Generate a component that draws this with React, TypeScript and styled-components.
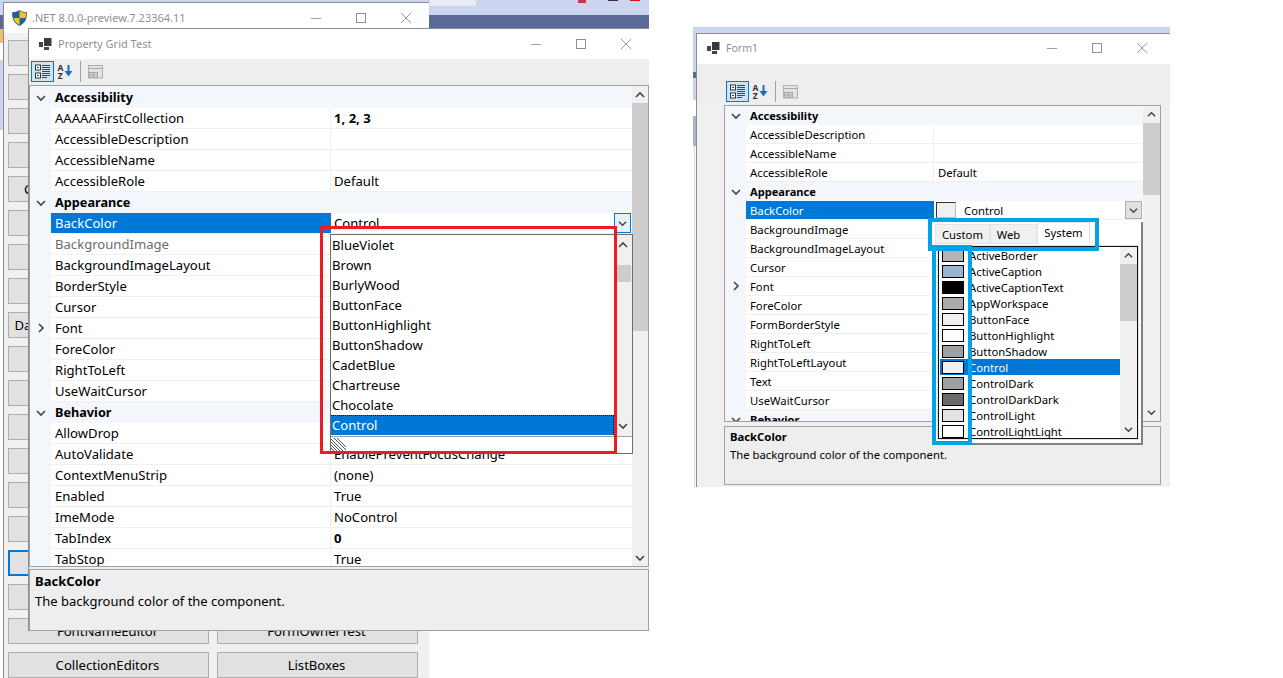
import React from "react";
import styled, { createGlobalStyle } from "styled-components";

const Global = createGlobalStyle`
  html, body { margin: 0; padding: 0; background: #fff; }
  * { box-sizing: border-box; }
`;

const FONT = `"Noto Sans", "Open Sans", "Liberation Sans", sans-serif`;

const Desktop = styled.div`
  position: relative;
  width: 1283px;
  height: 678px;
  overflow: hidden;
  background: #fff;
  font-family: ${FONT};
  color: #000;
`;

const Scrap = styled.div<{ $l: number; $t: number; $w: number; $h: number; $c: string }>`
  position: absolute;
  left: ${(p) => p.$l}px;
  top: ${(p) => p.$t}px;
  width: ${(p) => p.$w}px;
  height: ${(p) => p.$h}px;
  background: ${(p) => p.$c};
`;

const Win = styled.section<{ $l: number; $t: number; $w: number; $h: number }>`
  position: absolute;
  left: ${(p) => p.$l}px;
  top: ${(p) => p.$t}px;
  width: ${(p) => p.$w}px;
  height: ${(p) => p.$h}px;
  display: flex;
  flex-direction: column;
  background: #f0f0f0;
  border-left: 1px solid #8d8d8d;
  border-top: 1px solid #8d8d8d;
`;

const TitleBar = styled.header<{ $size: number; $pad: number; $gap: number; $lift?: number }>`
  flex: 0 0 30px;
  display: flex;
  align-items: center;
  background: #fff;
  color: #8f8f8f;
  font-size: ${(p) => p.$size}px;
  padding-left: ${(p) => p.$pad}px;
  padding-bottom: ${(p) => p.$lift || 0}px;
  gap: ${(p) => p.$gap}px;
`;

const TitleText = styled.span`
  flex: 1;
  white-space: nowrap;
  padding-bottom: 1px;
`;

const Caption = styled.div<{ $gap: number; $right: number }>`
  display: flex;
  gap: ${(p) => p.$gap}px;
  padding-right: ${(p) => p.$right}px;
  align-items: center;
`;

const ToolStrip = styled.div<{ $h: number; $pad: number; $top?: number }>`
  flex: 0 0 ${(p) => p.$h}px;
  display: flex;
  align-items: center;
  gap: 1px;
  background: #eeeeee;
  padding-left: ${(p) => p.$pad}px;
  padding-top: ${(p) => p.$top || 0}px;
`;

const ToolBtn = styled.div<{ $on?: boolean; $w: number; $h: number }>`
  width: ${(p) => p.$w}px;
  height: ${(p) => p.$h}px;
  display: flex;
  align-items: center;
  justify-content: center;
  background: ${(p) => (p.$on ? "#cce4f7" : "transparent")};
  border: 1px solid ${(p) => (p.$on ? "#0078d7" : "transparent")};
`;

const ToolSep = styled.div`
  width: 1px;
  height: 21px;
  margin: 0 3px 0 3px;
  background: #a0a0a0;
`;

const GridFrame = styled.div<{ $h: number; $m?: string }>`
  position: relative;
  flex: 0 0 ${(p) => p.$h}px;
  margin: ${(p) => p.$m || "0"};
  display: flex;
  background: #fff;
  border: 1px solid #a0a0a0;
  overflow: hidden;
`;

const Rows = styled.div<{ $top: number }>`
  flex: 1;
  min-width: 0;
  overflow: hidden;
  background: #f3f6fb;
  padding-top: ${(p) => p.$top}px;
`;

const Cat = styled.div<{ $h: number; $size: number; $m: number; $lift: number }>`
  height: ${(p) => p.$h}px;
  display: flex;
  align-items: center;
  font-size: ${(p) => p.$size}px;
  font-weight: 700;
  white-space: nowrap;
  padding-left: ${(p) => p.$m + 4}px;
  padding-bottom: ${(p) => p.$lift}px;
  position: relative;
`;

const CaretSlot = styled.span<{ $m: number }>`
  position: absolute;
  left: 0;
  top: 0;
  bottom: 0;
  width: ${(p) => p.$m}px;
  display: flex;
  align-items: center;
  justify-content: center;
`;

const Row = styled.div<{ $h: number; $size: number; $m: number }>`
  position: relative;
  height: ${(p) => p.$h}px;
  margin-left: ${(p) => p.$m}px;
  display: flex;
  background: #fff;
  font-size: ${(p) => p.$size}px;
  white-space: nowrap;
  border-bottom: 1px solid #f0f0f0;
`;

const RowCaret = styled.span<{ $m: number }>`
  position: absolute;
  left: -${(p) => p.$m}px;
  top: 0;
  bottom: 0;
  width: ${(p) => p.$m}px;
  display: flex;
  align-items: center;
  justify-content: center;
`;

const NameCell = styled.div<{ $w: number; $sel?: boolean; $dim?: boolean }>`
  flex: 0 0 ${(p) => p.$w}px;
  display: flex;
  align-items: center;
  padding-left: 4px;
  background: ${(p) => (p.$sel ? "#0078d7" : "#fff")};
  color: ${(p) => (p.$sel ? "#fff" : p.$dim ? "#6d6d6d" : "#000")};
  border-right: 1px solid ${(p) => (p.$sel ? "#0078d7" : "#f0f0f0")};
`;

const ValueCell = styled.div<{ $bold?: boolean; $pad: number }>`
  flex: 1;
  display: flex;
  align-items: center;
  padding-left: ${(p) => p.$pad}px;
  font-weight: ${(p) => (p.$bold ? 700 : 400)};
`;

const Swatch = styled.span`
  flex: 0 0 20px;
  height: 16px;
  margin: 0 8px 0 -2px;
  background: #f0f0f0;
  border: 1px solid #333;
  border-right-color: #bbb;
  border-bottom-color: #bbb;
`;

const EditBtn = styled.span<{ $blue?: boolean; $w: number }>`
  position: absolute;
  right: 1px;
  top: 0;
  bottom: 0;
  width: ${(p) => p.$w}px;
  display: flex;
  align-items: center;
  justify-content: center;
  background: ${(p) => (p.$blue ? "#e5f1fb" : "#e1e1e1")};
  border: 1px solid ${(p) => (p.$blue ? "#0078d7" : "#adadad")};
`;

const VBar = styled.div<{ $w: number }>`
  flex: 0 0 ${(p) => p.$w}px;
  display: flex;
  flex-direction: column;
  align-items: stretch;
  background: #f0f0f0;
`;

const BarBtn = styled.div<{ $h: number }>`
  flex: 0 0 ${(p) => p.$h}px;
  display: flex;
  align-items: center;
  justify-content: center;
`;

const Thumb = styled.div<{ $h: number; $inset?: number; $before?: number }>`
  flex: 0 0 ${(p) => p.$h}px;
  background: #cdcdcd;
  margin: ${(p) => p.$before || 0}px ${(p) => p.$inset || 0}px 0;
`;

const Spring = styled.div`
  flex: 1;
`;

const Help = styled.div<{ $h: number; $m: string; $size: number; $pad: string }>`
  flex: 0 0 ${(p) => p.$h}px;
  margin: ${(p) => p.$m};
  padding: ${(p) => p.$pad};
  background: #eeeeee;
  border: 1px solid #a0a0a0;
  font-size: ${(p) => p.$size}px;
  white-space: nowrap;
  line-height: ${(p) => Math.round(p.$size * 1.38)}px;
`;

const HelpTitle = styled.div`
  font-weight: 700;
`;

const HelpText = styled.div`
  margin-top: 2px;
`;

/* Back window */
const BackBody = styled.div`
  flex: 1;
  display: grid;
  grid-template-columns: 201px 201px;
  grid-auto-rows: 26px;
  gap: 8px;
  padding: 7px 0 0 4px;
  background: #f0f0f0;
  overflow: hidden;
`;

const BackBtn = styled.div<{ $focus?: boolean }>`
  display: flex;
  align-items: center;
  justify-content: center;
  background: #e1e1e1;
  font-size: 13.1px;
  white-space: nowrap;
  overflow: hidden;
  padding: 0 2px 1px 0;
  border: ${(p) => (p.$focus ? "2px solid #0078d7" : "1px solid #adadad")};
`;

/* Drop-downs laid over a property grid */
const ColorList = styled.div`
  position: absolute;
  left: 300px;
  top: 148px;
  width: 303px;
  height: 220px;
  display: flex;
  flex-direction: column;
  background: #fff;
  border: 1px solid #6e6e6e;
`;

const ColorListBody = styled.div`
  flex: 1;
  display: flex;
  min-height: 0;
`;

const ColorListItems = styled.div`
  flex: 1;
  min-width: 0;
`;

const ColorListItem = styled.div<{ $sel?: boolean }>`
  height: 20px;
  display: flex;
  align-items: center;
  padding-left: 1px;
  font-size: 13.1px;
  background: ${(p) => (p.$sel ? "#0078d7" : "#fff")};
  color: ${(p) => (p.$sel ? "#fff" : "#000")};
  ${(p) => (p.$sel ? "border-top: 1px dotted #111; border-right: 1px dotted #111; padding-bottom: 1px;" : "")}
`;

const Grip = styled.div`
  flex: 0 0 17px;
  display: flex;
  align-items: flex-end;
  border-top: 1px solid #a0a0a0;
`;

const PickerPanel = styled.div`
  position: absolute;
  left: 236px;
  top: 188px;
  width: 210px;
  height: 223px;
  background: #fff;
  border-right: 2px solid #808080;
  border-bottom: 2px solid #808080;
  padding: 0 2px 0 2px;
`;

const Tabs = styled.div`
  display: flex;
  align-items: flex-end;
  height: 22px;
`;

const Tab = styled.div<{ $w: number; $on?: boolean; $shift?: number }>`
  width: ${(p) => p.$w}px;
  height: ${(p) => (p.$on ? 22 : 20)}px;
  display: flex;
  align-items: center;
  justify-content: center;
  padding-bottom: ${(p) => (p.$on ? 3 : 0)}px;
  padding-right: ${(p) => p.$shift || 0}px;
  font-size: 11.3px;
  background: ${(p) => (p.$on ? "#fff" : "#f0f0f0")};
  border: 1px solid #e3e3e3;
  border-bottom: ${(p) => (p.$on ? "none" : "1px solid #e3e3e3")};
`;

const PickerBox = styled.div`
  margin: 2px 1px 0 3px;
  height: 193px;
  display: flex;
  border: 1px solid #111;
  box-shadow: 0 0 0 1px #e3e3e3;
`;

const PickerItems = styled.div`
  flex: 1;
  min-width: 0;
  padding-left: 1px;
  overflow: hidden;
`;

const PickerItem = styled.div<{ $sel?: boolean }>`
  height: 16px;
  display: flex;
  align-items: center;
  font-size: 11.3px;
  white-space: nowrap;
  padding-left: 2px;
  background: ${(p) => (p.$sel ? "#0078d7" : "#fff")};
  color: ${(p) => (p.$sel ? "#fff" : "#000")};
`;

const ChipBox = styled.span<{ $c: string }>`
  flex: 0 0 22px;
  height: 13px;
  margin-right: 5px;
  background: ${(p) => p.$c};
  border: 1px solid #000;
`;

const Mark = styled.div<{ $l: number; $t: number; $w: number; $h: number; $c: string; $b: number }>`
  position: absolute;
  left: ${(p) => p.$l}px;
  top: ${(p) => p.$t}px;
  width: ${(p) => p.$w}px;
  height: ${(p) => p.$h}px;
  border: ${(p) => p.$b}px solid ${(p) => p.$c};
  pointer-events: none;
`;

/* Icons */
const Chev = ({ dir, size = 10, color = "#444", w = 1.6 }: { dir: "up" | "down" | "right"; size?: number; color?: string; w?: number }) => {
  const d = dir === "up" ? "M1 7 L5 3 L9 7" : dir === "down" ? "M1 3 L5 7 L9 3" : "M3 1 L7 5 L3 9";
  return (
    <svg width={size} height={size} viewBox="0 0 10 10" fill="none">
      <path d={d} stroke={color} strokeWidth={w} />
    </svg>
  );
};

const AppGlyph = () => (
  <svg width="13" height="12" viewBox="0 0 13 12">
    <rect x="0" y="4" width="4" height="5" fill="#444" />
    <rect x="5" y="0" width="7.5" height="8" fill="#3a3a3a" />
    <rect x="5" y="9" width="5" height="3" fill="#444" />
  </svg>
);

const Shield = () => (
  <svg width="15" height="16" viewBox="0 0 15 16">
    <path d="M7.5 0.5 C5 2 3 2.5 0.5 2.5 C0.5 9 2 13 7.5 15.5 C13 13 14.5 9 14.5 2.5 C12 2.5 10 2 7.5 0.5Z" fill="#1f5fa8" stroke="#26364f" strokeWidth="0.6" />
    <path d="M7.5 1 C10 2.3 12 2.9 14 3 C14 4.8 13.9 6.4 13.6 8 L7.5 8Z" fill="#f5c518" />
    <path d="M7.5 8 L1.4 8 C2.2 11 3.8 13.3 7.5 15Z" fill="#f5c518" />
  </svg>
);

const CapMin = () => (
  <svg width="12" height="12" viewBox="0 0 12 12"><path d="M1 6.5H11" stroke="#a0a0a0" strokeWidth="1" /></svg>
);
const CapMax = () => (
  <svg width="12" height="12" viewBox="0 0 12 12"><rect x="1.5" y="1.5" width="9" height="9" fill="none" stroke="#8f8f8f" /></svg>
);
const CapClose = () => (
  <svg width="12" height="12" viewBox="0 0 12 12"><path d="M1 1L11 11M11 1L1 11" stroke="#9a9a9a" strokeWidth="1" /></svg>
);

const CategorizedIcon = () => (
  <svg width="16" height="15" viewBox="0 0 16 15">
    <rect x="0.5" y="1" width="5" height="5" fill="#fff" stroke="#333" />
    <path d="M2 3.5H4" stroke="#333" />
    <rect x="0.5" y="9" width="5" height="5" fill="#fff" stroke="#333" />
    <path d="M2 11.5H4" stroke="#333" />
    <path d="M7 1.5H15M7 3.5H15M7 5.5H15M7 7.5H15M7 9.5H15M7 11.5H15M7 13.5H12" stroke="#444" strokeWidth="1" />
  </svg>
);

const AlphaIcon = () => (
  <svg width="17" height="15" viewBox="0 0 17 15">
    <text x="0.5" y="7" fontFamily={FONT} fontSize="8.5" fontWeight="700" fill="#2f2f2f">A</text>
    <text x="0.8" y="14.5" fontFamily={FONT} fontSize="8.5" fontWeight="700" fill="#2f2f2f">Z</text>
    <path d="M11.5 1V10" stroke="#1c6fb8" strokeWidth="2" />
    <path d="M7.5 7L11.5 12.5L15.5 7Z" fill="#1c6fb8" />
  </svg>
);

const PagesIcon = () => (
  <svg width="15" height="14" viewBox="0 0 15 14" fill="none">
    <rect x="0.5" y="0.5" width="14" height="12.5" fill="#e4e4e4" stroke="#b0b0b0" />
    <path d="M0.5 3.5H14.5" stroke="#a8a8a8" />
    <rect x="1.5" y="7.5" width="8" height="5" fill="#d6d6d6" stroke="#a8a8a8" />
    <path d="M1.5 10H9.5M5.5 7.5V12.5" stroke="#a8a8a8" />
  </svg>
);

const Hatch = () => (
  <svg width="15" height="15" viewBox="0 0 15 15" fill="none" stroke="#555" strokeWidth="1">
    <path d="M0 1L14 15M0 4L11 15M0 7L8 15M0 10L5 15M3 0L15 12M6 0L15 9" />
  </svg>
);

const Caps = ({ gap, right }: { gap: number; right: number }) => (
  <Caption $gap={gap} $right={right}>
    <CapMin />
    <CapMax />
    <CapClose />
  </Caption>
);

type Item =
  | { cat: string }
  | { name: string; value?: string; bold?: boolean; dim?: boolean; sel?: boolean; exp?: boolean };

type GridMetrics = { rowH: number; catH: number; size: number; catSize: number; margin: number; nameW: number; top: number; catLift: number; valPad: number };

const GridRows = ({ items, m, swatch, editW, editBlue }: { items: Item[]; m: GridMetrics; swatch?: boolean; editW: number; editBlue?: boolean }) => (
  <Rows $top={m.top}>
    {items.map((it) =>
      "cat" in it ? (
        <Cat key={it.cat} $h={m.catH} $size={m.catSize} $m={m.margin} $lift={m.catLift}>
          <CaretSlot $m={m.margin}><Chev dir="down" /></CaretSlot>
          {it.cat}
        </Cat>
      ) : (
        <Row key={it.name} $h={m.rowH} $size={m.size} $m={m.margin}>
          {it.exp && <RowCaret $m={m.margin}><Chev dir="right" /></RowCaret>}
          <NameCell $w={m.nameW} $sel={it.sel} $dim={it.dim}>{it.name}</NameCell>
          <ValueCell $bold={it.bold} $pad={m.valPad}>
            {it.sel && swatch && <Swatch />}
            {it.value}
          </ValueCell>
          {it.sel && <EditBtn $w={editW} $blue={editBlue}><Chev dir="down" size={9} /></EditBtn>}
        </Row>
      )
    )}
  </Rows>
);

const mainItems: Item[] = [
  { cat: "Accessibility" },
  { name: "AAAAAFirstCollection", value: "1, 2, 3", bold: true },
  { name: "AccessibleDescription" },
  { name: "AccessibleName" },
  { name: "AccessibleRole", value: "Default" },
  { cat: "Appearance" },
  { name: "BackColor", value: "Control", sel: true },
  { name: "BackgroundImage", dim: true },
  { name: "BackgroundImageLayout" },
  { name: "BorderStyle" },
  { name: "Cursor" },
  { name: "Font", exp: true },
  { name: "ForeColor" },
  { name: "RightToLeft" },
  { name: "UseWaitCursor" },
  { cat: "Behavior" },
  { name: "AllowDrop" },
  { name: "AutoValidate", value: "EnablePreventFocusChange" },
  { name: "ContextMenuStrip", value: "(none)" },
  { name: "Enabled", value: "True" },
  { name: "ImeMode", value: "NoControl" },
  { name: "TabIndex", value: "0", bold: true },
  { name: "TabStop", value: "True" },
];

const formItems: Item[] = [
  { cat: "Accessibility" },
  { name: "AccessibleDescription" },
  { name: "AccessibleName" },
  { name: "AccessibleRole", value: "Default" },
  { cat: "Appearance" },
  { name: "BackColor", value: "Control", sel: true },
  { name: "BackgroundImage" },
  { name: "BackgroundImageLayout" },
  { name: "Cursor" },
  { name: "Font", exp: true },
  { name: "ForeColor" },
  { name: "FormBorderStyle" },
  { name: "RightToLeft" },
  { name: "RightToLeftLayout" },
  { name: "Text" },
  { name: "UseWaitCursor" },
  { cat: "Behavior" },
];

const webColors = ["BlueViolet", "Brown", "BurlyWood", "ButtonFace", "ButtonHighlight", "ButtonShadow", "CadetBlue", "Chartreuse", "Chocolate", "Control"];

const sysColors: [string, string][] = [
  ["ActiveBorder", "#b4b4b4"],
  ["ActiveCaption", "#99b4d1"],
  ["ActiveCaptionText", "#000000"],
  ["AppWorkspace", "#ababab"],
  ["ButtonFace", "#f0f0f0"],
  ["ButtonHighlight", "#ffffff"],
  ["ButtonShadow", "#a0a0a0"],
  ["Control", "#f0f0f0"],
  ["ControlDark", "#a0a0a0"],
  ["ControlDarkDark", "#696969"],
  ["ControlLight", "#e3e3e3"],
  ["ControlLightLight", "#ffffff"],
];

// two columns of test buttons; most of them lie wholly under the top window
const backButtons: string[] = Array.from({ length: 38 }, () => "");
backButtons[8] = "CollectionEditorsTestForms";
backButtons[16] = "DataGridViewTestingHarness1";
backButtons[34] = "FontNameEditor";
backButtons[35] = "FormOwnerTest";
backButtons[36] = "CollectionEditors";
backButtons[37] = "ListBoxes";

export default function App() {
  return (
    <Desktop>
      <Global />
      {/* what shows of the desktop behind the windows */}
      <Scrap $l={0} $t={0} $w={649} $h={15} $c="#ccd5f0" />
      <Scrap $l={0} $t={15} $w={649} $h={14} $c="#5a6a96" />
      <Scrap $l={430} $t={0} $w={46} $h={6} $c="#e8ecf5" />
      <Scrap $l={578} $t={0} $w={8} $h={3} $c="#c8324a" />
      <Scrap $l={608} $t={0} $w={10} $h={1} $c="#333" />
      <Scrap $l={630} $t={0} $w={10} $h={1} $c="#d01818" />
      <Scrap $l={0} $t={29} $w={3} $h={14} $c="#f0c070" />
      <Scrap $l={0} $t={60} $w={3} $h={70} $c="#ccd5f0" />
      <Scrap $l={693} $t={27} $w={477} $h={6} $c="#ccd5f0" />
      <Scrap $l={693} $t={33} $w={3} $h={67} $c="#ccd5f0" />
      <Scrap $l={693} $t={72} $w={3} $h={6} $c="#5a6a96" />
      <Scrap $l={693} $t={116} $w={3} $h={30} $c="#a8b4c8" />
      <Scrap $l={694} $t={146} $w={1} $h={342} $c="#d8d8d8" />

      <Win $l={3} $t={2} $w={426} $h={676}>
        <TitleBar $size={11} $pad={8} $gap={5}>
          <Shield />
          <TitleText>.NET 8.0.0-preview.7.23364.11</TitleText>
          <Caps gap={33} right={17} />
        </TitleBar>
        <BackBody>
          {backButtons.map((label, i) => (
            <BackBtn key={i} $focus={i === 30}>{label}</BackBtn>
          ))}
        </BackBody>
      </Win>

      <Win $l={28} $t={28} $w={621} $h={603}>
        <TitleBar $size={11} $pad={10} $gap={6}>
          <AppGlyph />
          <TitleText>Property Grid Test</TitleText>
          <Caps gap={33} right={17} />
        </TitleBar>
        <ToolStrip $h={25} $pad={2}>
          <ToolBtn $on $w={23} $h={21}><CategorizedIcon /></ToolBtn>
          <ToolBtn $w={21} $h={21}><AlphaIcon /></ToolBtn>
          <ToolSep />
          <ToolBtn $w={20} $h={21}><PagesIcon /></ToolBtn>
        </ToolStrip>
        <GridFrame $h={482} $m="1px 0 0 0">
          <GridRows
            items={mainItems}
            m={{ rowH: 21, catH: 21, size: 13.1, catSize: 12.7, margin: 21, nameW: 280, top: 1, catLift: 2, valPad: 3 }}
            editW={17}
            editBlue
          />
          <VBar $w={16}>
            <BarBtn $h={17}><Chev dir="up" /></BarBtn>
            <Thumb $h={228} />
            <Spring />
            <BarBtn $h={17}><Chev dir="down" /></BarBtn>
          </VBar>
          <ColorList>
            <ColorListBody>
              <ColorListItems>
                {webColors.map((c) => (
                  <ColorListItem key={c} $sel={c === "Control"}>{c}</ColorListItem>
                ))}
              </ColorListItems>
              <VBar $w={18}>
                <BarBtn $h={20}><Chev dir="up" /></BarBtn>
                <Thumb $h={17} $inset={1} $before={10} />
                <Spring />
                <BarBtn $h={20}><Chev dir="down" /></BarBtn>
              </VBar>
            </ColorListBody>
            <Grip><Hatch /></Grip>
          </ColorList>
        </GridFrame>
        <Help $h={62} $m="2px 0 0 0" $size={13} $pad="2px 5px">
          <HelpTitle>BackColor</HelpTitle>
          <HelpText>The background color of the component.</HelpText>
        </Help>
      </Win>

      <Win $l={696} $t={33} $w={474} $h={454}>
        <TitleBar $size={10.5} $pad={10} $gap={6} $lift={2}>
          <AppGlyph />
          <TitleText>Form1</TitleText>
          <Caps gap={33} right={22} />
        </TitleBar>
        <ToolStrip $h={41} $pad={29} $top={14}>
          <ToolBtn $on $w={23} $h={21}><CategorizedIcon /></ToolBtn>
          <ToolBtn $w={21} $h={21}><AlphaIcon /></ToolBtn>
          <ToolSep />
          <ToolBtn $w={20} $h={21}><PagesIcon /></ToolBtn>
        </ToolStrip>
        <GridFrame $h={317} $m="0 9px 0 27px">
          <GridRows
            items={formItems}
            m={{ rowH: 19, catH: 19, size: 11.3, catSize: 11.1, margin: 21, nameW: 188, top: 0, catLift: 0, valPad: 4 }}
            swatch
            editW={17}
          />
          <VBar $w={17}>
            <BarBtn $h={17}><Chev dir="up" size={9} /></BarBtn>
            <Thumb $h={72} />
            <Spring />
            <BarBtn $h={17}><Chev dir="down" size={9} /></BarBtn>
          </VBar>
        </GridFrame>
        <Help $h={59} $m="4px 9px 0 27px" $size={11.3} $pad="2px 5px">
          <HelpTitle>BackColor</HelpTitle>
          <HelpText>The background color of the component.</HelpText>
        </Help>
        <PickerPanel>
          <Tabs>
            <Tab $w={55}>Custom</Tab>
            <Tab $w={47} $shift={10}>Web</Tab>
            <Tab $w={53} $on>System</Tab>
          </Tabs>
          <PickerBox>
            <PickerItems>
              {sysColors.map(([n, c]) => (
                <PickerItem key={n} $sel={n === "Control"}>
                  <ChipBox $c={c} />
                  {n}
                </PickerItem>
              ))}
            </PickerItems>
            <VBar $w={17}>
              <BarBtn $h={17}><Chev dir="up" size={9} /></BarBtn>
              <Thumb $h={57} />
              <Spring />
              <BarBtn $h={17}><Chev dir="down" size={9} /></BarBtn>
            </VBar>
          </PickerBox>
        </PickerPanel>
      </Win>

      <Mark $l={320} $t={226} $w={297} $h={228} $c="#ed1c24" $b={3} />
      <Mark $l={928} $t={218} $w={171} $h={33} $c="#00a2e8" $b={4} />
      <Mark $l={932} $t={245} $w={40} $h={200} $c="#00a2e8" $b={4} />
    </Desktop>
  );
}
